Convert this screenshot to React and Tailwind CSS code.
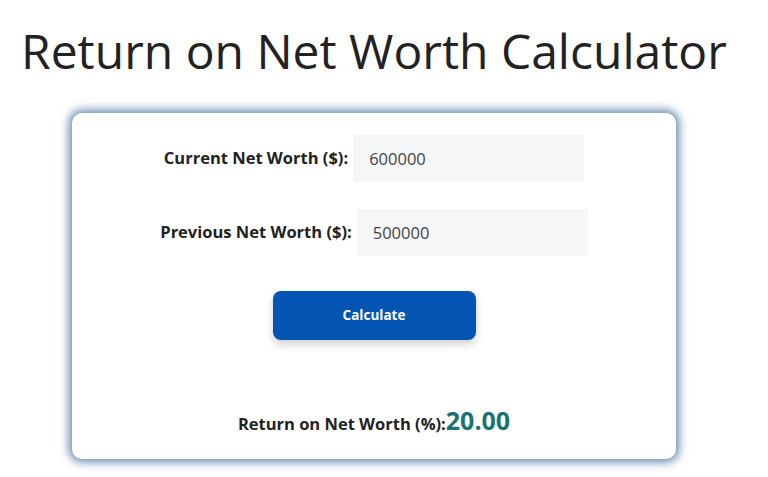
export default function App() {
  return (
    <div className="min-h-[477px] bg-white font-['Open_Sans',sans-serif] text-[#222]">
      <h1 className="pl-[21px] pt-[21px] text-[48px] font-normal leading-[60px] text-[#222]">
        Return on Net Worth Calculator
      </h1>

      <div className="mx-[72px] mt-[32px] h-[346px] w-[604px] rounded-[10px] bg-white shadow-[0_0_10px_3px_rgba(40,85,140,0.7)] flex flex-col items-center pt-[22px]">
        <div className="flex items-center gap-[5px]">
          <label className="text-[16.5px] font-bold text-[#222]">Current Net Worth ($):</label>
          <input
            type="text"
            defaultValue="600000"
            className="h-[47px] w-[231px] bg-[#f5f6f8] px-[16px] text-[16.5px] text-[#444] outline-none"
          />
        </div>

        <div className="mt-[27px] flex items-center gap-[5px]">
          <label className="text-[16.5px] font-bold text-[#222]">Previous Net Worth ($):</label>
          <input
            type="text"
            defaultValue="500000"
            className="h-[47px] w-[231px] bg-[#f5f6f8] px-[16px] text-[16.5px] text-[#444] outline-none"
          />
        </div>

        <button className="mt-[35px] h-[49px] w-[203px] rounded-[8px] bg-[#0455b3] text-[13.5px] font-bold text-white shadow-[0_4px_8px_rgba(0,0,0,0.2)]">
          Calculate
        </button>

        <div className="mt-[62px] flex items-baseline">
          <span className="text-[16.5px] font-bold text-[#222]">Return on Net Worth (%):</span>
          <span className="text-[25px] font-bold text-[#1a7370]">20.00</span>
        </div>
      </div>
    </div>
  );
}
